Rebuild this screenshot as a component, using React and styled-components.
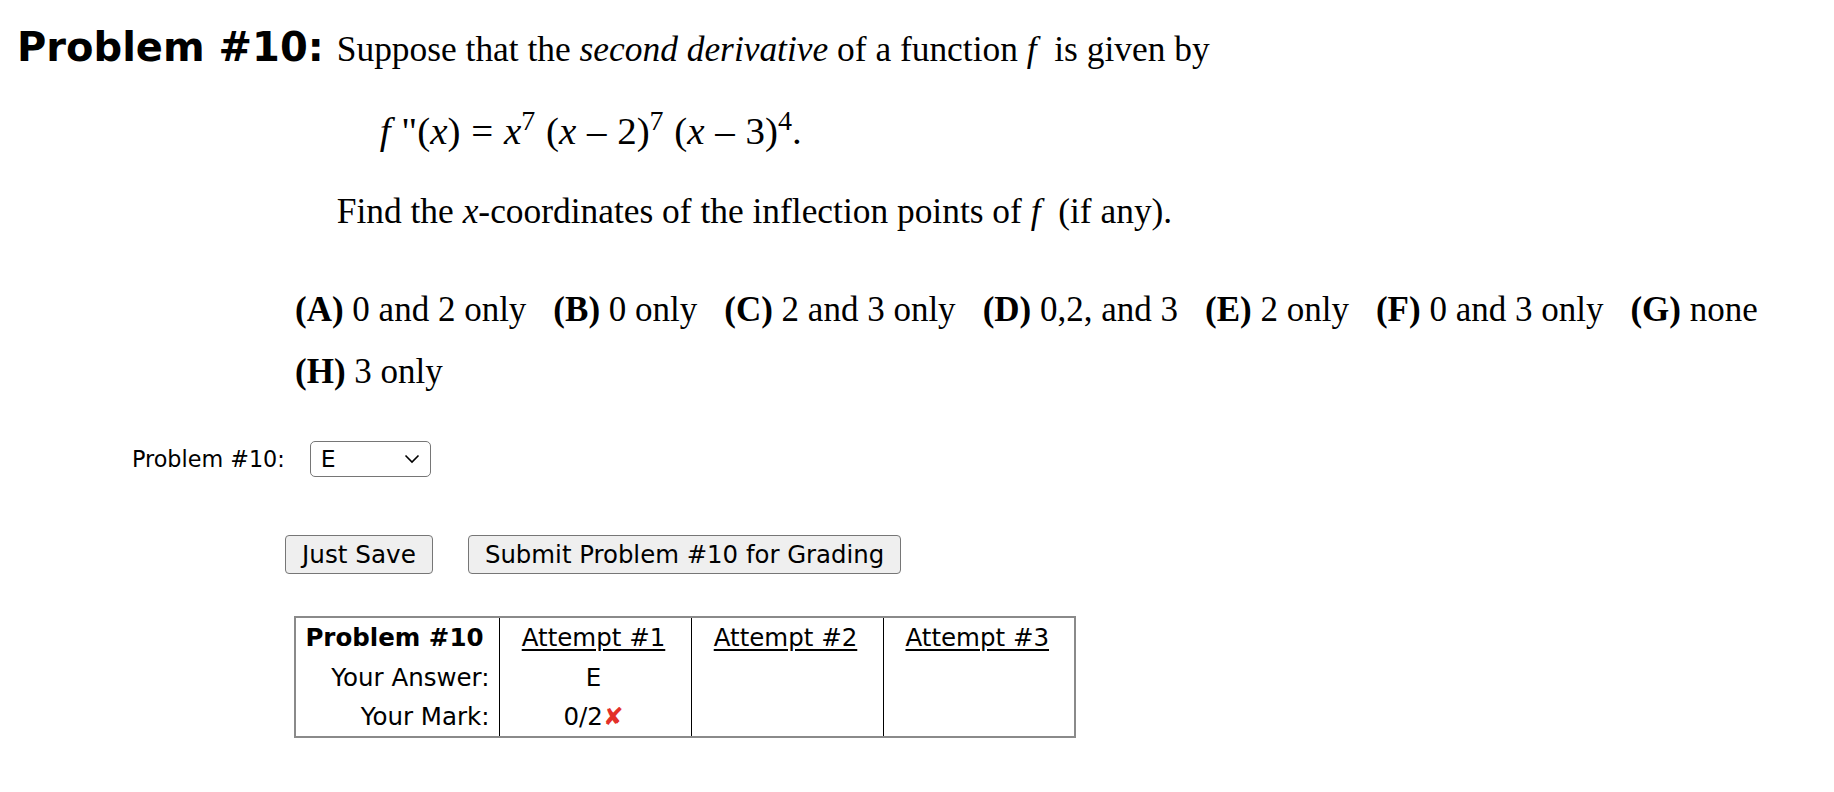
import styled, { createGlobalStyle } from 'styled-components';

const GlobalStyle = createGlobalStyle`
  html, body {
    margin: 0;
    padding: 0;
    background: #fff;
    color: #000;
  }
`;

const sans = `"DejaVu Sans", Verdana, sans-serif`;
const serif = `"Liberation Serif", "Times New Roman", serif`;

const Page = styled.div`
  padding: 24px 0 0 17px;
  width: 1834px;
  box-sizing: border-box;
`;

const Header = styled.div`
  display: flex;
  align-items: baseline;
`;

const Title = styled.h2`
  margin: 0;
  font-family: ${sans};
  font-weight: bold;
  font-size: 40px;
  white-space: nowrap;
`;

const Statement = styled.div`
  margin-left: 13px;
  font-family: ${serif};
  font-size: 35.4px;
`;

const Line = styled.p`
  margin: 0;
  line-height: 40px;
`;

const Equation = styled.div`
  margin: 42px 0 40px 43px;
  font-size: 1.1em;
  line-height: 40px;
  white-space: nowrap;
  word-spacing: 1px;
`;

const Sup = styled.sup`
  font-size: 0.72em;
  line-height: 0;
  vertical-align: 0.5em;
`;

const Options = styled.div`
  margin: 58px 0 0 278px;
  max-width: 1500px;
  display: flex;
  flex-wrap: wrap;
  column-gap: 27px;
  row-gap: 20px;
  font-family: ${serif};
  font-size: 35px;
  line-height: 42px;
`;

const Opt = styled.span`
  white-space: nowrap;
  b {
    font-weight: bold;
  }
`;

const AnswerRow = styled.div`
  margin: 48px 0 0 115px;
  display: flex;
  align-items: center;
  gap: 25px;
  font-family: ${sans};
  font-size: 22.3px;
`;

const SelectWrap = styled.div`
  position: relative;
  width: 121px;
  height: 36px;
`;

const Select = styled.select`
  appearance: none;
  width: 100%;
  height: 100%;
  box-sizing: border-box;
  border: 1.5px solid #767676;
  border-radius: 5px;
  background: #fff;
  padding: 0 0 0 10px;
  font-family: ${sans};
  font-size: 23.5px;
  color: #000;
`;

const Chevron = styled.svg`
  position: absolute;
  right: 11px;
  top: 13px;
  width: 16px;
  height: 10px;
  pointer-events: none;
`;

const Buttons = styled.div`
  margin: 58px 0 0 268px;
  display: flex;
  gap: 35px;
`;

const Button = styled.button`
  height: 39px;
  padding: 0 16px;
  font-family: ${sans};
  font-size: ${(p) => (p.$wide ? '24.4px' : '24.7px')};
  color: #000;
  background: #efefef;
  border: 1.5px solid #767676;
  border-radius: 4px;
`;

const Table = styled.table`
  margin: 42px 0 0 277px;
  border-collapse: collapse;
  border: 2px solid #8a8a8a;
  font-family: ${sans};
  font-size: 24.5px;
`;

const Cell = styled.td`
  box-sizing: border-box;
  height: 40px;
  padding: 0 ${(p) => (p.$head ? '15px' : '9px')} 0 6px;
  text-align: ${(p) => (p.$label ? 'right' : 'center')};
  font-weight: ${(p) => (p.$head ? 'bold' : 'normal')};
  border-left: ${(p) => (p.$label ? 'none' : '1.5px solid #000')};
  width: ${(p) => (p.$label ? '204px' : '192px')};
  white-space: nowrap;
`;

const AttemptLink = styled.a`
  color: #000;
  text-decoration: underline;
  text-underline-offset: 3px;
`;

const Cross = styled.span`
  color: #e3302a;
  font-weight: bold;
`;

const options = [
  ['A', '0 and 2 only'],
  ['B', '0 only'],
  ['C', '2 and 3 only'],
  ['D', '0,2, and 3'],
  ['E', '2 only'],
  ['F', '0 and 3 only'],
  ['G', 'none'],
  ['H', '3 only'],
];

export default function App() {
  return (
    <Page>
      <GlobalStyle />
      <Header>
        <Title>Problem #10:</Title>
        <Statement>
          <Line>
            Suppose that the <i>second derivative</i> of a function <i>f</i>&nbsp; is given by
          </Line>
          <Equation>
            <i>f</i>&nbsp;"(<i>x</i>) = <i>x</i>
            <Sup>7</Sup> (<i>x</i> – 2)<Sup>7</Sup> (<i>x</i> – 3)<Sup>4</Sup>.
          </Equation>
          <Line>
            Find the <i>x</i>-coordinates of the inflection points of <i>f</i>&nbsp; (if any).
          </Line>
        </Statement>
      </Header>

      <Options>
        {options.map(([letter, text]) => (
          <Opt key={letter}>
            <b>({letter})</b> {text}
          </Opt>
        ))}
      </Options>

      <AnswerRow>
        <span>Problem #10:</span>
        <SelectWrap>
          <Select defaultValue="E">
            {options.map(([letter]) => (
              <option key={letter} value={letter}>
                {letter}
              </option>
            ))}
          </Select>
          <Chevron viewBox="0 0 16 10">
            <path d="M1.5 1.5 L8 8 L14.5 1.5" fill="none" stroke="#000" strokeWidth="1.6" />
          </Chevron>
        </SelectWrap>
      </AnswerRow>

      <Buttons>
        <Button>Just Save</Button>
        <Button $wide>Submit Problem #10 for Grading</Button>
      </Buttons>

      <Table>
        <tbody>
          <tr>
            <Cell $label $head>Problem #10</Cell>
            <Cell><AttemptLink href="#">Attempt #1</AttemptLink></Cell>
            <Cell><AttemptLink href="#">Attempt #2</AttemptLink></Cell>
            <Cell><AttemptLink href="#">Attempt #3</AttemptLink></Cell>
          </tr>
          <tr>
            <Cell $label>Your Answer:</Cell>
            <Cell>E</Cell>
            <Cell />
            <Cell />
          </tr>
          <tr>
            <Cell $label>Your Mark:</Cell>
            <Cell>
              0/2<Cross>✘</Cross>
            </Cell>
            <Cell />
            <Cell />
          </tr>
        </tbody>
      </Table>
    </Page>
  );
}
